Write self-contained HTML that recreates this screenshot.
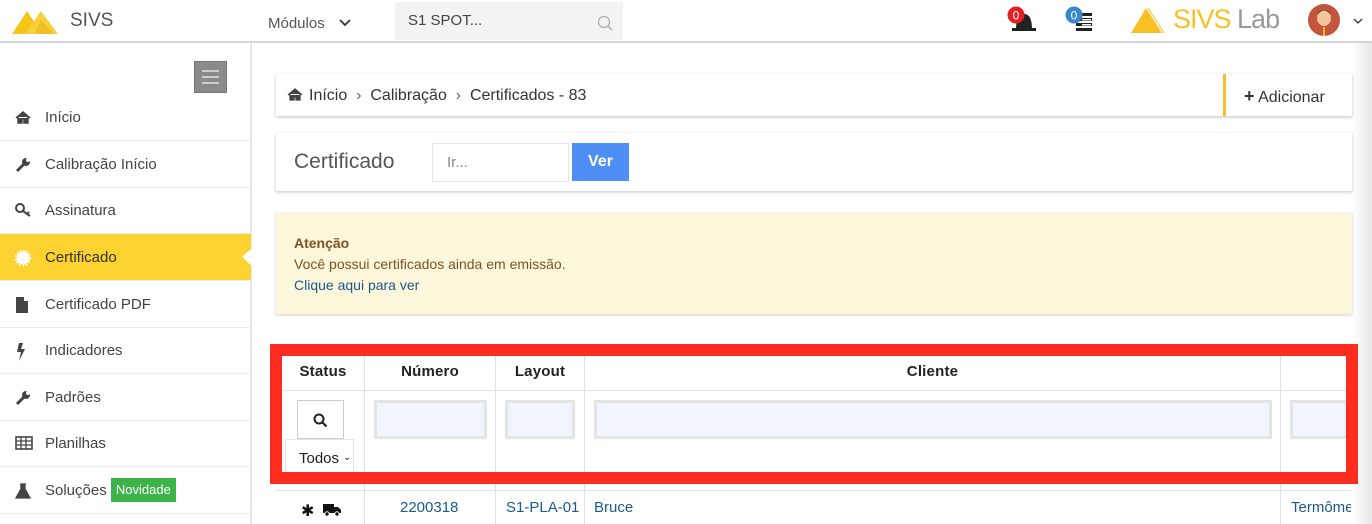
<!DOCTYPE html>
<html><head><meta charset="utf-8"><style>
*{box-sizing:border-box;margin:0;padding:0}
body{width:1372px;height:524px;overflow:hidden;background:#fff;font-family:"Liberation Sans",sans-serif;color:#333;position:relative}
.a{position:absolute}
.top{left:0;top:0;width:1372px;height:43px;border-bottom:2px solid #d5d5d5;background:#fff}
.side{left:0;top:43px;width:252px;height:481px;border-right:2px solid #e6e6e6;background:#fff}
.item{position:absolute;left:0;width:251px;height:47px;border-bottom:1px solid #eaeaea;font-size:15px;color:#444;line-height:48px;padding-left:45px}
.item svg{position:absolute;left:15px;top:16px}
.panel{background:#fff;box-shadow:0 1px 3px rgba(0,0,0,.25)}
.th{position:absolute;top:356px;height:34px;line-height:28px;text-align:center;font-weight:bold;font-size:15px;color:#222;letter-spacing:.2px}
.vl{position:absolute;top:356px;width:1px;height:168px;background:#e2e2e2}
.inp{position:absolute;top:400px;height:39px;background:#f1f4fd;border:3px solid #e4e4e4}
.lnk{color:#1a5a8c;font-size:15px}
</style></head><body>
<div class="a top"></div>
<svg class="a" style="left:12px;top:8px" width="46" height="26" viewBox="0 0 46 26"><polygon points="0,26 15,3 30,26" fill="#f5c518"/><polygon points="13,26 29,3 46,26" fill="#f7d03c"/><polygon points="22,26 29,12 42,26" fill="#e9b810" opacity=".6"/></svg>
<div class="a" style="left:70px;top:10px;font-size:19px;color:#555">SIVS</div>
<div class="a" style="left:268px;top:15px;font-size:15px;color:#555">Módulos</div>
<svg class="a" style="left:339px;top:19px" width="12" height="8"><path d="M1 1l5 5 5-5" stroke="#333" stroke-width="1.8" fill="none"/></svg>
<div class="a" style="left:395px;top:2px;width:228px;height:38px;background:#f3f3f3"></div>
<div class="a" style="left:408px;top:12px;font-size:15px;color:#444">S1 SPOT...</div>
<svg class="a" style="left:597px;top:15px" width="16" height="17"><circle cx="7" cy="7" r="5.5" stroke="#aaa" stroke-width="1.2" fill="none"/><path d="M11 11l4 4" stroke="#aaa" stroke-width="1.3"/></svg>
<svg class="a" style="left:1004px;top:4px" width="34" height="30"><path d="M12 26 C12 16 14 10 20 10 C26 10 28 16 28 26 Z" fill="#222"/><rect x="8" y="24" width="24" height="3" fill="#222"/><circle cx="12" cy="11" r="8.5" fill="#e31e24"/><text x="12" y="15.5" font-size="12" fill="#fff" text-anchor="middle" font-family="Liberation Sans">0</text></svg>
<svg class="a" style="left:1062px;top:4px" width="34" height="30"><rect x="14" y="9" width="16" height="3" fill="#222"/><rect x="14" y="14" width="16" height="3" fill="#222"/><rect x="14" y="19" width="16" height="3" fill="#222"/><rect x="14" y="24" width="16" height="3" fill="#222"/><rect x="20" y="15" width="9" height="1.5" fill="#fff"/><rect x="20" y="20" width="9" height="1.5" fill="#fff"/><circle cx="12" cy="11" r="8.5" fill="#3a87c9"/><text x="12" y="15.5" font-size="12" fill="#fff" text-anchor="middle" font-family="Liberation Sans">0</text></svg>
<svg class="a" style="left:1129px;top:6px" width="36" height="28"><polygon points="2,27 17,2 33,27" fill="#f9c023"/><path d="M19 2 L35 27" stroke="#f9c023" stroke-width="1"/></svg>
<div class="a" style="left:1173px;top:4px;font-size:27px;color:#f9c023;letter-spacing:-1px">SIVS <span style="color:#999;font-weight:normal">Lab</span></div>
<svg class="a" style="left:1307px;top:3px" width="36" height="34"><circle cx="17" cy="17" r="16" fill="#c4553d"/><ellipse cx="17" cy="15" rx="7" ry="8" fill="#f3c39a"/><path d="M10 12 Q17 3 24 12 Q22 7 17 7 Q12 7 10 12Z" fill="#222"/><rect x="16" y="24" width="2" height="9" fill="#f9c023"/></svg>
<svg class="a" style="left:1353px;top:18px" width="10" height="7"><path d="M1 1l4 4 4-4" stroke="#333" stroke-width="1.3" fill="none"/></svg>

<div class="a side"></div>
<div class="a" style="left:194px;top:61px;width:33px;height:32px;background:#8a8a8a;border:1px solid #777"></div>
<div class="a" style="left:202px;top:70px;width:17px;height:2px;background:#ccc;box-shadow:0 6px 0 #ccc,0 12px 0 #ccc"></div>
<div class="item" style="top:94px"><svg width="16" height="14"><path d="M1 8L8 2l7 6M3 7v6h4v-4h2v4h4V7" fill="#444" stroke="#444" stroke-width="1.5"/></svg>Início</div>
<div class="item" style="top:141px"><svg width="16" height="16"><path d="M2 14l7-7" stroke="#444" stroke-width="3"/><circle cx="11" cy="5" r="4" fill="#444"/><circle cx="13" cy="3" r="2" fill="#fff"/></svg>Calibração Início</div>
<div class="item" style="top:187px"><svg width="18" height="14"><circle cx="5" cy="5" r="4" stroke="#444" stroke-width="2" fill="none"/><path d="M8 8l7 5M12 11l2-2" stroke="#444" stroke-width="2"/></svg>Assinatura</div>
<div class="item" style="top:234px;background:#fbd22f;color:#333"><svg width="16" height="16"><circle cx="8" cy="8" r="6.5" fill="#fff"/><circle cx="8" cy="8" r="7.5" fill="none" stroke="#fff" stroke-width="1.5" stroke-dasharray="2 1.5"/></svg>Certificado</div>
<div class="a" style="left:242px;top:248px;width:0;height:0;border-top:9px solid transparent;border-bottom:9px solid transparent;border-right:10px solid #fff"></div>
<div class="item" style="top:281px"><svg width="14" height="16"><path d="M1 0h8l4 4v12H1z" fill="#444"/><path d="M9 0v4h4" fill="#fff"/></svg>Certificado PDF</div>
<div class="item" style="top:327px"><svg width="14" height="18"><path d="M4 0h4l-2 6h4L4 18l2-9H2z" fill="#444"/></svg>Indicadores</div>
<div class="item" style="top:374px"><svg width="16" height="16"><path d="M2 14l7-7" stroke="#444" stroke-width="3"/><circle cx="11" cy="5" r="4" fill="#444"/><circle cx="13" cy="3" r="2" fill="#fff"/></svg>Padrões</div>
<div class="item" style="top:420px"><svg width="18" height="14"><rect x="1" y="1" width="16" height="12" fill="none" stroke="#444" stroke-width="1.6"/><path d="M1 5h16M1 9h16M6 1v12M11 1v12" stroke="#444" stroke-width="1.3"/></svg>Planilhas</div>
<div class="item" style="top:467px"><svg width="16" height="16"><path d="M5 1h6M6 1v5L1 15h14L10 6V1" fill="#444" stroke="#444" stroke-width="1.3"/></svg>Soluções <span style="display:inline-block;background:#3cb44a;color:#fff;font-size:13px;line-height:24px;padding:0 5px;vertical-align:1px">Novidade</span></div>

<div class="a" style="left:1352px;top:43px;width:20px;height:481px;background:linear-gradient(90deg,#fff,#e6e6e6)"></div>
<div class="a panel" style="left:276px;top:74px;width:1076px;height:42px"></div>
<svg class="a" style="left:287px;top:88px" width="16" height="13"><path d="M1 7L8 1l7 6M3 6v6h4V9h2v3h4V6" fill="#444" stroke="#444" stroke-width="1.3"/></svg>
<div class="a" style="left:309px;top:87px;font-size:16px;color:#333">Início &nbsp;<span style="color:#666">›</span>&nbsp; Calibração &nbsp;<span style="color:#666">›</span>&nbsp; Certificados - 83</div>
<div class="a" style="left:1223px;top:74px;width:3px;height:42px;background:#f9c023"></div>
<div class="a" style="left:1244px;top:86px;font-size:16px;color:#333"><b style="font-size:18px">+</b> Adicionar</div>

<div class="a panel" style="left:276px;top:133px;width:1076px;height:58px"></div>
<div class="a" style="left:294px;top:150px;font-size:21px;color:#555">Certificado</div>
<div class="a" style="left:432px;top:143px;width:137px;height:39px;border:1px solid #e3e3e3;font-size:15px;color:#888;padding:10px 14px">Ir...</div>
<div class="a" style="left:572px;top:143px;width:57px;height:38px;background:#4d8ff5;color:#fff;font-size:16px;font-weight:bold;text-align:center;line-height:38px">Ver</div>

<div class="a" style="left:276px;top:213px;width:1076px;height:101px;background:#fcf6db;box-shadow:0 1px 3px rgba(0,0,0,.2)"></div>
<div class="a" style="left:294px;top:233px;font-size:14px;line-height:21px;color:#7a5420"><b>Atenção</b><br>Você possui certificados ainda em emissão.<br><span style="color:#1a5a8c">Clique aqui para ver</span></div>

<div class="a" style="left:276px;top:356px;width:1076px;height:168px;background:#fff"></div>
<div class="a" style="left:282px;top:390px;width:1064px;height:1px;background:#e2e2e2"></div>
<div class="a" style="left:276px;top:490px;width:1076px;height:1px;background:#e2e2e2"></div>
<div class="vl" style="left:364px"></div><div class="vl" style="left:495px"></div><div class="vl" style="left:584px"></div><div class="vl" style="left:1280px"></div>
<div class="th" style="left:282px;width:82px;padding-top:2px">Status</div>
<div class="th" style="left:365px;width:130px;padding-top:2px">Número</div>
<div class="th" style="left:496px;width:88px;padding-top:2px">Layout</div>
<div class="th" style="left:585px;width:695px;padding-top:2px">Cliente</div>
<div class="a" style="left:297px;top:400px;width:47px;height:39px;border:1px solid #ccc;background:#fff"></div>
<svg class="a" style="left:313px;top:413px" width="15" height="15"><circle cx="6" cy="6" r="4.5" stroke="#222" stroke-width="2" fill="none"/><path d="M9.5 9.5l4 4" stroke="#222" stroke-width="2.2"/></svg>
<div class="a" style="left:285px;top:439px;width:69px;height:33px;border:1px solid #e5e5e5;border-bottom:none;font-size:15px;color:#222;padding:10px 0 0 13px;overflow:hidden;white-space:nowrap">Todos<span style="font-size:10px;position:absolute;left:57px;top:12px">⌄</span></div>
<div class="inp" style="left:374px;width:113px"></div>
<div class="inp" style="left:505px;width:70px"></div>
<div class="inp" style="left:594px;width:678px"></div>
<div class="inp" style="left:1290px;width:56px;border-right:none"></div>
<div class="a" style="left:270px;top:344px;width:1088px;height:140px;border:12px solid #fe2d20"></div>
<div class="a" style="left:301px;top:501px;font-size:16px;color:#111">✱</div>
<svg class="a" style="left:323px;top:503px" width="18" height="14"><rect x="0" y="1" width="11" height="9" fill="#111"/><path d="M11 4h4l3 3v3h-7z" fill="#111"/><circle cx="4" cy="11" r="2.2" fill="#111" stroke="#fff"/><circle cx="14" cy="11" r="2.2" fill="#111" stroke="#fff"/></svg>
<div class="a lnk" style="left:400px;top:499px">2200318</div>
<div class="a lnk" style="left:506px;top:499px">S1-PLA-01</div>
<div class="a lnk" style="left:594px;top:499px">Bruce</div>
<div class="a lnk" style="left:1291px;top:499px;width:60px;overflow:hidden;white-space:nowrap">Termômetro</div>
</body></html>
